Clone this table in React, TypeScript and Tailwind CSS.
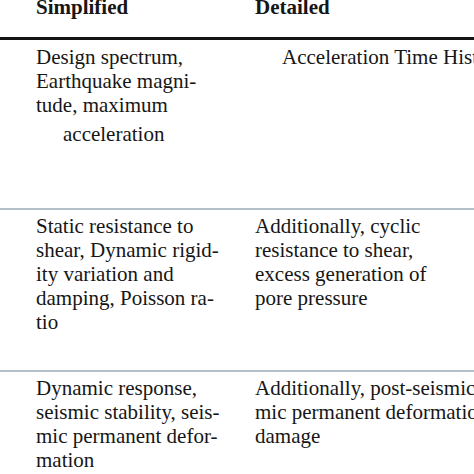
type Row = {
  simplified: string[];
  detailed: string[];
  height: string;
  indentLast?: boolean;
  detailedIndent?: boolean;
};

const rows: Row[] = [
  {
    simplified: ["Design spectrum,", "Earthquake magni-", "tude, maximum", "acceleration"],
    detailed: ["Acceleration Time History"],
    height: "h-[170px] pt-[5px]",
    indentLast: true,
    detailedIndent: true,
  },
  {
    simplified: [
      "Static resistance to",
      "shear, Dynamic rigid-",
      "ity variation and",
      "damping, Poisson ra-",
      "tio",
    ],
    detailed: [
      "Additionally, cyclic",
      "resistance to shear,",
      "excess generation of",
      "pore pressure",
    ],
    height: "h-[162px] pt-[4px]",
  },
  {
    simplified: [
      "Dynamic response,",
      "seismic stability, seis-",
      "mic permanent defor-",
      "mation",
    ],
    detailed: ["Additionally, post-seismic seis-", "mic permanent deformation and", "damage"],
    height: "h-[120px] pt-[4px]",
  },
];

export default function App() {
  return (
    <div className="h-[474px] w-[474px] overflow-hidden bg-white font-[family-name:'Liberation_Serif','Times_New_Roman',serif] text-[21px] leading-[24px] text-[#161616]">
      <div className="-mt-[5px] grid grid-cols-[219px_1fr] pb-[18px] pl-[36px] font-bold">
        <div>Simplified</div>
        <div>Detailed</div>
      </div>
      <div className="h-[3px] bg-[#141414]" />

      {rows.map((row, i) => (
        <div
          key={i}
          className={`grid grid-cols-[219px_1fr] pl-[36px] ${row.height} ${
            i < rows.length - 1 ? "border-b-2 border-[#b3c0ca]" : ""
          }`}
        >
          <div className="whitespace-nowrap">
            {row.simplified.map((line, j) => (
              <div
                key={j}
                className={
                  row.indentLast && j === row.simplified.length - 1
                    ? "mt-[5px] pl-[27px]"
                    : ""
                }
              >
                {line}
              </div>
            ))}
          </div>
          <div className={`whitespace-nowrap ${row.detailedIndent ? "pl-[27px]" : ""}`}>
            {row.detailed.map((line, j) => (
              <div key={j}>{line}</div>
            ))}
          </div>
        </div>
      ))}
    </div>
  );
}
